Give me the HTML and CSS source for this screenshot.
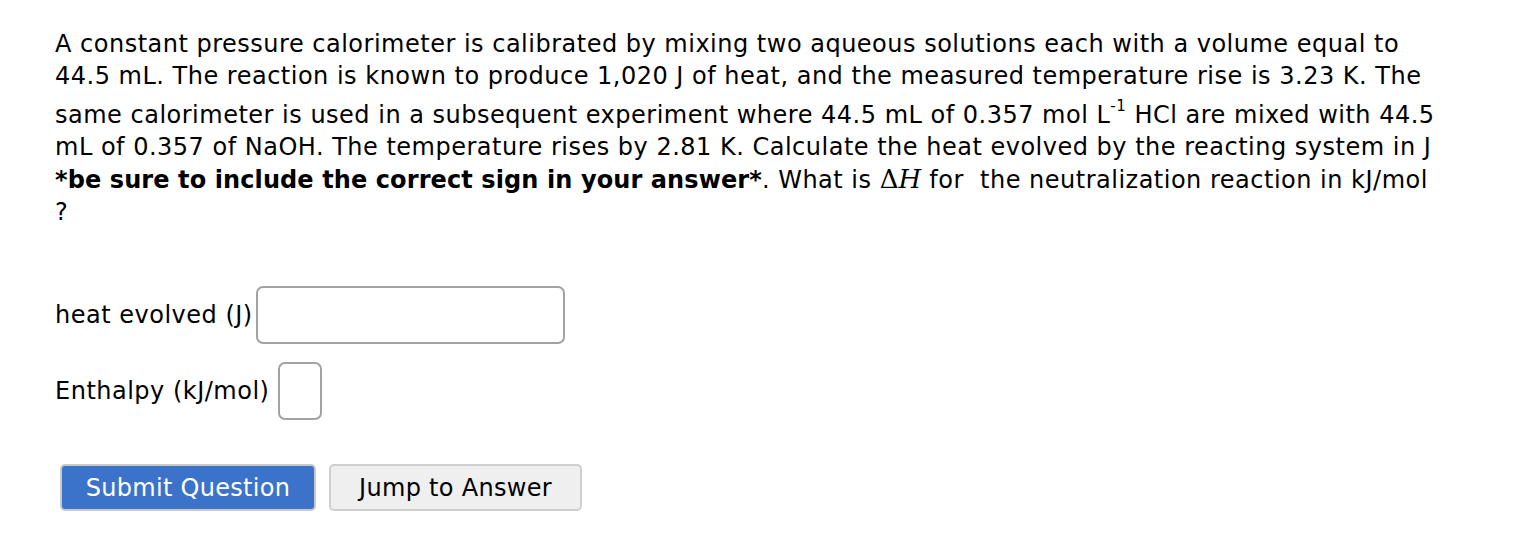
FILE: index.html
```html
<!DOCTYPE html>
<html lang="en">
<head>
<meta charset="utf-8">
<title>Question</title>
<link rel="stylesheet" href="styles.css">
</head>
<body>
<div class="question">
  <p class="stem">A constant pressure calorimeter is calibrated by mixing two aqueous solutions each with a volume equal to 44.5 mL. The reaction is known to produce 1,020 J of heat, and the measured temperature rise is 3.23 K. The same calorimeter is used in a subsequent experiment where 44.5 mL of 0.357 mol L<sup>-1</sup> HCl are mixed with 44.5 mL of 0.357 of NaOH. The temperature rises by 2.81 K. Calculate the heat evolved by the reacting system in J <b>*be sure to include the correct sign in your answer*</b>. What is <span class="math"><span class="delta">&Delta;</span><i>H</i></span> for &nbsp;the neutralization reaction in kJ/mol ?</p>
  <div class="field field-first">
    <label for="a1">heat evolved (J)</label><input id="a1" class="answer wide" type="text">
  </div>
  <div class="field field-second">
    <label for="a2">Enthalpy (kJ/mol)</label><input id="a2" class="answer narrow" type="text">
  </div>
  <div class="actions">
    <button class="btn primary" type="button">Submit Question</button>
    <button class="btn secondary" type="button">Jump to Answer</button>
  </div>
</div>
</body>
</html>
```
FILE: styles.css
```css
html, body {
  margin: 0;
  padding: 0;
  background: #ffffff;
}
body {
  font-family: "DejaVu Sans", "Liberation Sans", sans-serif;
  color: #000;
  font-size: 24px;
  letter-spacing: 0.5px;
}
.question {
  width: 1388px;
  padding: 28px 0 0 55px;
}
.stem {
  margin: 0;
  line-height: 32px;
}
.stem sup {
  font-size: 15px;
  line-height: 28px;
  vertical-align: 12px;
}
.stem b {
  font-weight: bold;
  letter-spacing: 0.1px;
}
.math {
  font-family: "DejaVu Serif", "Liberation Serif", serif;
  font-size: 26px;
  letter-spacing: 0;
}
.math i {
  font-style: italic;
}
.field {
  display: flex;
  align-items: center;
}
.field-first {
  margin-top: 58px;
}
.field-second {
  margin-top: 18px;
}
.field label {
  white-space: nowrap;
}
.answer {
  box-sizing: border-box;
  height: 58px;
  border: 2px solid #a2a2a2;
  border-radius: 7px;
  background: #fff;
  font: inherit;
  padding: 0 8px;
  margin: 0;
}
.wide {
  width: 309px;
  margin-left: 3px;
}
.narrow {
  width: 44px;
  margin-left: 9px;
}
.actions {
  display: flex;
  gap: 13px;
  margin-top: 44px;
  padding-left: 5px;
}
.btn {
  box-sizing: border-box;
  height: 47px;
  border-radius: 5px;
  font-family: inherit;
  font-size: 24px;
  letter-spacing: 0.3px;
  padding: 0;
  cursor: pointer;
}
.primary {
  width: 256px;
  background: #3b73ca;
  color: #fff;
  border: 2px solid #c9c9c9;
}
.secondary {
  width: 253px;
  background: #efefef;
  color: #000;
  border: 2px solid #cfcfcf;
}
```
